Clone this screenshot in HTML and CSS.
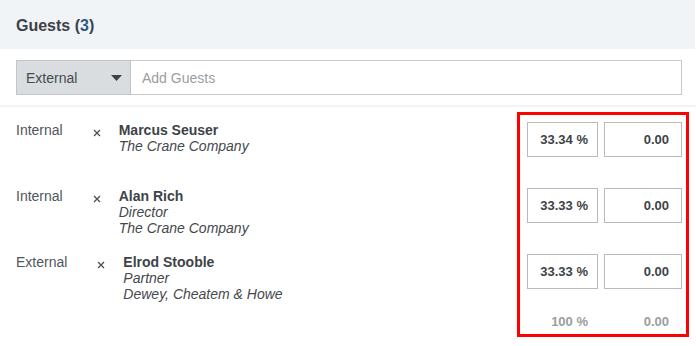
FILE: index.html
```html
<!DOCTYPE html>
<html>
<head>
<meta charset="utf-8">
<link rel="stylesheet" href="styles.css">
</head>
<body>
<div class="header">
  <h2 class="title">Guests <span class="paren">(</span><span class="count">3</span><span class="paren">)</span></h2>
</div>
<div class="add-row">
  <div class="select">
    <span>External</span>
    <svg class="caret" width="11" height="6" viewBox="0 0 11 6"><path d="M0 0 L11 0 L5.5 6 Z" fill="#3d4246"/></svg>
  </div>
  <div class="search">Add Guests</div>
</div>
<div class="divider"></div>
<div class="body">
  <div class="guests">
    <div class="guest">
      <span class="type">Internal</span>
      <svg class="remove" width="8" height="8" viewBox="0 0 8 8"><path d="M1 1 L7 7 M7 1 L1 7" stroke="#4a4f54" stroke-width="1.3"/></svg>
      <div class="info">
        <div class="name">Marcus Seuser</div>
        <div class="sub">The Crane Company</div>
      </div>
    </div>
    <div class="guest">
      <span class="type">Internal</span>
      <svg class="remove" width="8" height="8" viewBox="0 0 8 8"><path d="M1 1 L7 7 M7 1 L1 7" stroke="#4a4f54" stroke-width="1.3"/></svg>
      <div class="info">
        <div class="name">Alan Rich</div>
        <div class="sub">Director</div>
        <div class="sub">The Crane Company</div>
      </div>
    </div>
    <div class="guest">
      <span class="type">External</span>
      <svg class="remove" width="8" height="8" viewBox="0 0 8 8"><path d="M1 1 L7 7 M7 1 L1 7" stroke="#4a4f54" stroke-width="1.3"/></svg>
      <div class="info">
        <div class="name">Elrod Stooble</div>
        <div class="sub">Partner</div>
        <div class="sub">Dewey, Cheatem &amp; Howe</div>
      </div>
    </div>
  </div>
  <div class="alloc">
    <div class="alloc-list">
      <div class="alloc-row"><div class="box pct">33.34 %</div><div class="box amt">0.00</div></div>
      <div class="alloc-row"><div class="box pct">33.33 %</div><div class="box amt">0.00</div></div>
      <div class="alloc-row"><div class="box pct">33.33 %</div><div class="box amt">0.00</div></div>
    </div>
    <div class="totals"><div class="tot pct">100 %</div><div class="tot amt">0.00</div></div>
  </div>
</div>
</body>
</html>
```
FILE: styles.css
```css
* { box-sizing: border-box; }
html, body { margin: 0; padding: 0; background: #fff; }
body {
  width: 696px;
  height: 346px;
  overflow: hidden;
  font-family: "Liberation Sans", Arial, sans-serif;
  font-size: 14px;
  color: #3d4246;
}
.header {
  height: 49px;
  width: 695px;
  background: #f0f4f7;
  padding: 17px 16px 0;
}
.title {
  margin: 0;
  font-size: 16px;
  line-height: 18px;
  font-weight: bold;
  color: #3d4246;
}
.count { color: #2b5a86; }
.add-row {
  display: flex;
  height: 35px;
  margin: 11px 14px 0 16px;
}
.select {
  width: 115px;
  display: flex;
  align-items: center;
  justify-content: space-between;
  padding: 0 8px 0 9px;
  background: #dadddf;
  border: 1px solid #c3c6c8;
  color: #464b4f;
}
.caret { margin-top: 1px; }
.search {
  flex: 1;
  display: flex;
  align-items: center;
  padding-left: 11px;
  border: 1px solid #c8c8c8;
  border-left: none;
  color: #9a9ea1;
}
.divider {
  margin-top: 10px;
  height: 2px;
  background: #f2f4f6;
}
.body {
  display: flex;
  padding-top: 5px;
}
.guests {
  flex: 1;
  padding: 10px 0 0 16px;
}
.guest {
  display: flex;
  align-items: flex-start;
  height: 66px;
  line-height: 16px;
}
.type {
  color: #50565b;
  margin-right: 30px;
}
.remove {
  margin-top: 7px;
  margin-right: 18px;
}
.name {
  font-weight: bold;
  color: #3d4347;
}
.sub {
  font-style: italic;
  color: #45494d;
}
.alloc {
  width: 172px;
  height: 225px;
  margin-right: 7px;
  border: 3px solid #ff0000;
  padding: 7px 4px 0 7px;
}
.alloc-list {
  display: flex;
  flex-direction: column;
  gap: 31px;
}
.alloc-row, .totals {
  display: flex;
  gap: 6px;
}
.box {
  height: 35px;
  border: 1px solid #b9bbbd;
  display: flex;
  align-items: center;
  justify-content: flex-end;
  font-size: 13px;
  font-weight: bold;
  color: #3d4347;
}
.pct { width: 71px; padding-right: 9px; }
.amt { width: 78px; padding-right: 12px; }
.totals { margin-top: 25px; }
.tot {
  line-height: 16px;
  text-align: right;
  font-size: 13px;
  font-weight: bold;
  color: #9a9da0;
}
.tot.pct { padding-right: 10px; }
.tot.amt { padding-right: 13px; }
```
